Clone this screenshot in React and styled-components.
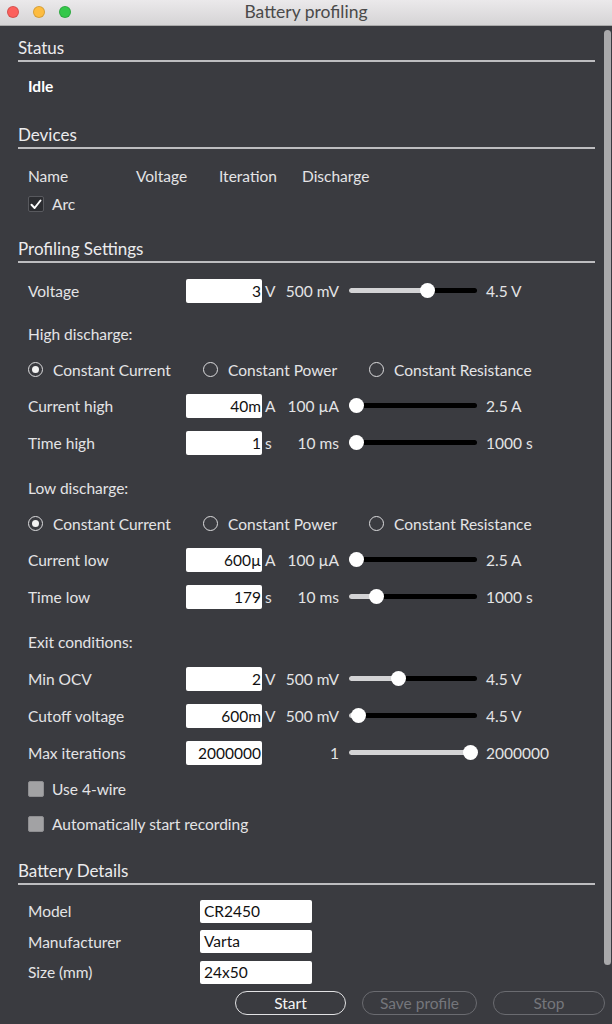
import React from "react";
import styled, { createGlobalStyle } from "styled-components";

const GlobalStyle = createGlobalStyle`
  html, body { margin: 0; padding: 0; background: #3a3b40; }
  body { font-family: Lato, "Open Sans", sans-serif; -webkit-font-smoothing: antialiased; }
  * { box-sizing: border-box; }
`;

const Window = styled.div`
  position: relative;
  width: 612px;
  height: 1024px;
  overflow: hidden;
  background: #3a3b40;
  color: #e4e4e6;
  font-size: 15.5px;
  display: flex;
  flex-direction: column;
`;

const TitleBar = styled.div`
  height: 26px;
  flex: 0 0 26px;
  display: grid;
  grid-template-columns: 80px 1fr 80px;
  align-items: center;
  background: linear-gradient(#ebe9eb, #d5d4d5);
  border-bottom: 1px solid #a9a9a9;
`;

const Lights = styled.div`
  display: flex;
  gap: 14px;
  padding-left: 7px;
  margin-top: -2px;
`;

const Light = styled.span`
  width: 12px;
  height: 12px;
  border-radius: 50%;
  background: ${(p) => p.$color};
  border: 0.5px solid rgba(0, 0, 0, 0.15);
`;

const Title = styled.div`
  text-align: center;
  color: #4a4a4a;
  font-size: 17.5px;
  margin-top: -2px;
`;

const Content = styled.div`
  padding: 11px 17px 0 18px;
`;

const SectionHeader = styled.div`
  font-size: 17px;
  line-height: 22px;
  color: #ececee;
  padding-bottom: 1px;
  border-bottom: 2px solid #bdbdc0;
  margin-top: ${(p) => p.$mt || 0}px;
`;

const Indent = styled.div`
  padding-left: 10px;
  margin-top: ${(p) => p.$mt || 0}px;
`;

const StatusText = styled.div`
  height: 36px;
  display: flex;
  align-items: center;
  font-weight: 700;
  color: #fff;
`;

const DeviceHead = styled.div`
  display: grid;
  grid-template-columns: 108px 83px 83px auto;
  height: 28px;
  align-items: center;
`;

const CheckRow = styled.label`
  display: flex;
  align-items: center;
  gap: 8px;
  height: ${(p) => p.$h || 35}px;
`;

const Box = styled.span`
  width: 16px;
  height: 16px;
  border-radius: 2px;
  display: inline-flex;
  align-items: center;
  justify-content: center;
  background: ${(p) => (p.$checked ? "#2c2d31" : "#a2a2a4")};
  border: 1px solid ${(p) => (p.$checked ? "#58595e" : "#8e8e91")};
`;

const GroupLabel = styled.div`
  height: 36px;
  display: flex;
  align-items: center;
  margin-top: ${(p) => p.$mt || 0}px;
`;

const RadioRow = styled.div`
  display: grid;
  grid-template-columns: 175px 166px auto;
  height: 35px;
  align-items: center;
`;

const RadioItem = styled.label`
  display: flex;
  align-items: center;
  gap: 10px;
`;

const RadioCircle = styled.span`
  width: 15px;
  height: 15px;
  border-radius: 50%;
  border: 1.5px solid #dcdcde;
  display: inline-flex;
  align-items: center;
  justify-content: center;
  &::after {
    content: "";
    width: 7px;
    height: 7px;
    border-radius: 50%;
    background: ${(p) => (p.$on ? "#f2f2f2" : "transparent")};
  }
`;

const FieldRow = styled.div`
  display: grid;
  grid-template-columns: 158px 76px 20px 57px 138px auto;
  height: 37px;
  align-items: center;
`;

const ValueInput = styled.div`
  height: 24px;
  background: #fff;
  border-radius: 2px;
  color: #111;
  text-align: right;
  padding-right: 1px;
  line-height: 24px;
  white-space: nowrap;
  overflow: hidden;
`;

const Unit = styled.span`
  padding-left: 3px;
`;

const MinLabel = styled.span`
  text-align: right;
  white-space: nowrap;
`;

const MaxLabel = styled.span`
  padding-left: 9px;
`;

const SliderWrap = styled.div`
  padding-left: 10px;
  display: flex;
  align-items: center;
`;

const Track = styled.div`
  position: relative;
  width: 128px;
  height: 5px;
  border-radius: 3px;
  background: #000;
`;

const Fill = styled.div`
  height: 100%;
  border-radius: 3px 0 0 3px;
  background: #d3d3d5;
`;

const Thumb = styled.div`
  position: absolute;
  top: 50%;
  width: 15px;
  height: 15px;
  margin-left: -7.5px;
  margin-top: -7.5px;
  border-radius: 50%;
  background: #fff;
`;

const DetailRow = styled.div`
  display: grid;
  grid-template-columns: 172px 112px;
  height: 30.5px;
  align-items: center;
`;

const TextInput = styled.div`
  height: 23px;
  background: #fff;
  border-radius: 2px;
  color: #111;
  padding-left: 4px;
  line-height: 23px;
`;

const Footer = styled.div`
  display: flex;
  justify-content: flex-end;
  gap: 16px;
  padding: 3.5px 7px 0 0;
`;

const Button = styled.button`
  width: ${(p) => p.$w}px;
  height: 24px;
  border-radius: 12px;
  background: transparent;
  border: 1.5px solid ${(p) => (p.disabled ? "#6a6b70" : "#e2e2e4")};
  color: ${(p) => (p.disabled ? "#75767b" : "#f4f4f4")};
  font-family: inherit;
  font-size: 15.5px;
  padding: 0;
`;

const ScrollThumb = styled.div`
  position: absolute;
  top: 30px;
  right: 1px;
  width: 7px;
  height: 935px;
  border-radius: 4px;
  background: #a9a9ab;
`;

const Check = () => (
  <svg width="12" height="11" viewBox="0 0 12 11">
    <path d="M1.5 5.8 L4.6 9 L10.5 1.5" fill="none" stroke="#fff" strokeWidth="2" strokeLinecap="round" strokeLinejoin="round" />
  </svg>
);

const Slider = ({ value }) => {
  const x = 7 + value * 114;
  return (
    <SliderWrap>
      <Track>
        <Fill style={{ width: `${x}px` }} />
        <Thumb style={{ left: `${x}px` }} />
      </Track>
    </SliderWrap>
  );
};

const Field = ({ label, value, unit, min, max, pos }) => (
  <FieldRow>
    <span>{label}</span>
    <ValueInput>{value}</ValueInput>
    <Unit>{unit}</Unit>
    <MinLabel>{min}</MinLabel>
    <Slider value={pos} />
    <MaxLabel>{max}</MaxLabel>
  </FieldRow>
);

const Radios = () => (
  <RadioRow>
    <RadioItem><RadioCircle $on />Constant Current</RadioItem>
    <RadioItem><RadioCircle />Constant Power</RadioItem>
    <RadioItem><RadioCircle />Constant Resistance</RadioItem>
  </RadioRow>
);

export default function App() {
  return (
    <Window>
      <GlobalStyle />
      <TitleBar>
        <Lights>
          <Light $color="#fc605c" />
          <Light $color="#fdbc40" />
          <Light $color="#34c84a" />
        </Lights>
        <Title>Battery profiling</Title>
        <span />
      </TitleBar>
      <Content>
        <SectionHeader>Status</SectionHeader>
        <Indent $mt={6}>
          <StatusText>Idle</StatusText>
        </Indent>

        <SectionHeader $mt={20}>Devices</SectionHeader>
        <Indent $mt={13}>
          <DeviceHead>
            <span>Name</span>
            <span>Voltage</span>
            <span>Iteration</span>
            <span>Discharge</span>
          </DeviceHead>
          <CheckRow $h={28}>
            <Box $checked><Check /></Box>
            Arc
          </CheckRow>
        </Indent>

        <SectionHeader $mt={20}>Profiling Settings</SectionHeader>
        <Indent $mt={9}>
          <Field label="Voltage" value="3" unit="V" min="500 mV" max="4.5 V" pos={0.625} />
          <GroupLabel $mt={7}>High discharge:</GroupLabel>
          <Radios />
          <Field label="Current high" value="40m" unit="A" min="100 µA" max="2.5 A" pos={0} />
          <Field label="Time high" value="1" unit="s" min="10 ms" max="1000 s" pos={0} />
          <GroupLabel $mt={9}>Low discharge:</GroupLabel>
          <Radios />
          <Field label="Current low" value="600µ" unit="A" min="100 µA" max="2.5 A" pos={0} />
          <Field label="Time low" value="179" unit="s" min="10 ms" max="1000 s" pos={0.18} />
          <GroupLabel $mt={9}>Exit conditions:</GroupLabel>
          <Field label="Min OCV" value="2" unit="V" min="500 mV" max="4.5 V" pos={0.375} />
          <Field label="Cutoff voltage" value="600m" unit="V" min="500 mV" max="4.5 V" pos={0.025} />
          <Field label="Max iterations" value="2000000" unit="" min="1" max="2000000" pos={1} />
          <CheckRow>
            <Box />
            Use 4-wire
          </CheckRow>
          <CheckRow>
            <Box />
            Automatically start recording
          </CheckRow>
        </Indent>

        <SectionHeader $mt={19}>Battery Details</SectionHeader>
        <Indent $mt={11}>
          <DetailRow>
            <span>Model</span>
            <TextInput>CR2450</TextInput>
          </DetailRow>
          <DetailRow>
            <span>Manufacturer</span>
            <TextInput>Varta</TextInput>
          </DetailRow>
          <DetailRow>
            <span>Size (mm)</span>
            <TextInput>24x50</TextInput>
          </DetailRow>
        </Indent>
      </Content>
      <Footer>
        <Button $w={111}>Start</Button>
        <Button $w={115} disabled>Save profile</Button>
        <Button $w={112} disabled>Stop</Button>
      </Footer>
      <ScrollThumb />
    </Window>
  );
}
